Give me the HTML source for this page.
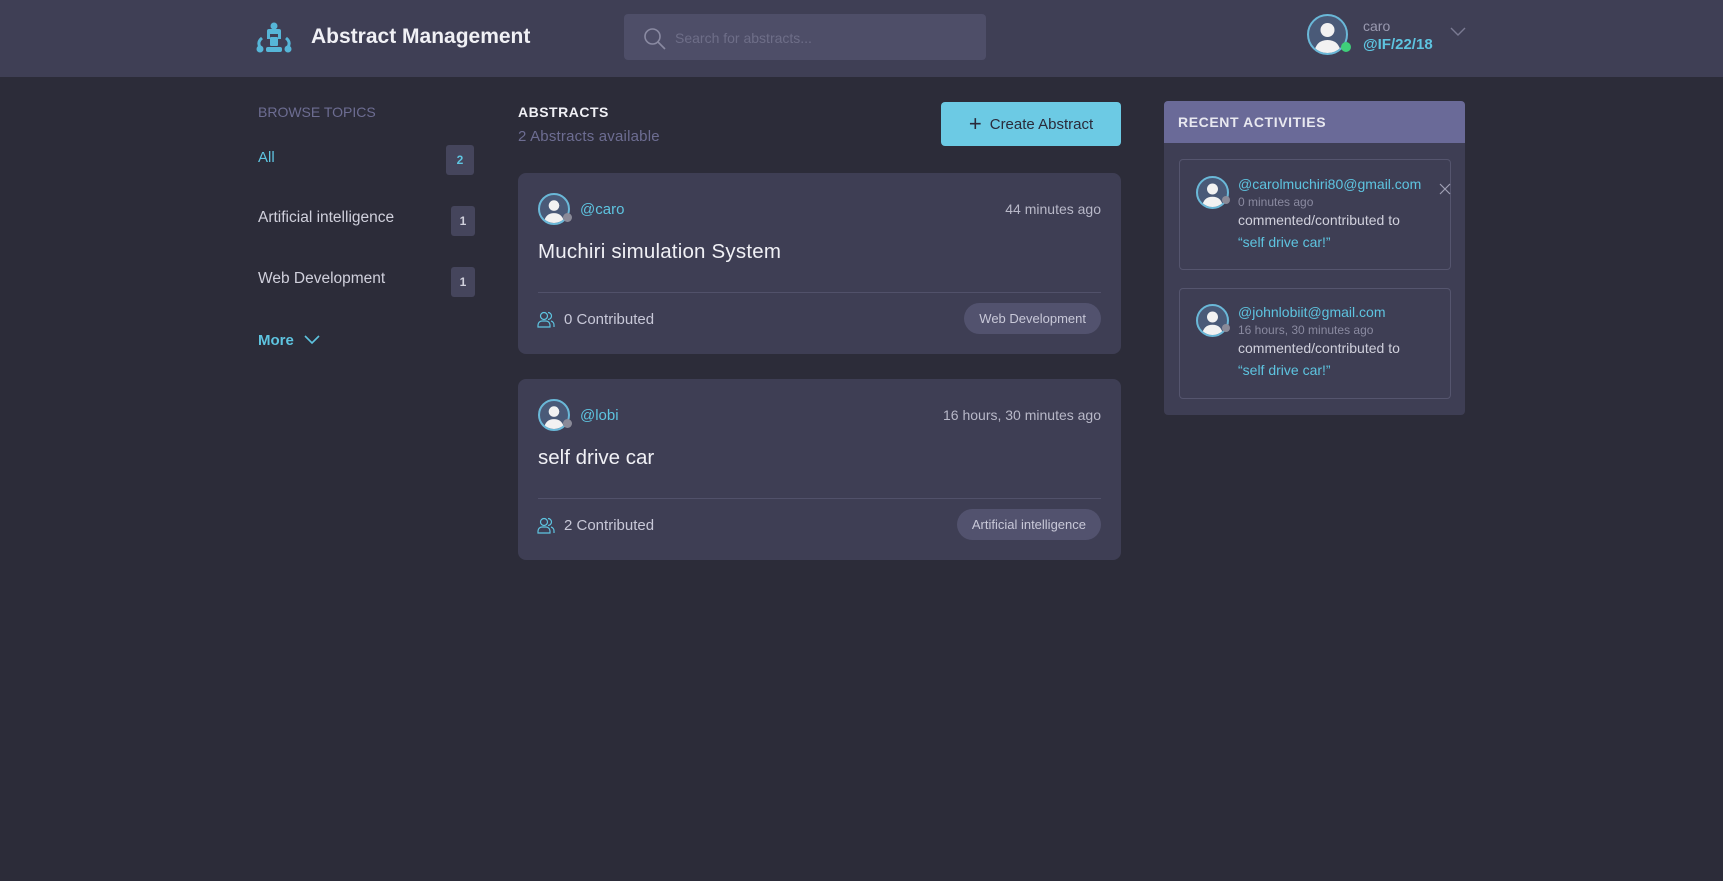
<!DOCTYPE html>
<html><head><meta charset="utf-8"><style>
*{box-sizing:border-box;margin:0;padding:0}
body{width:1723px;height:881px;background:#2c2c39;font-family:"Liberation Sans",sans-serif;position:relative;overflow:hidden;color:#e0e0ea}
.a{position:absolute}
.hdr{left:0;top:0;width:1723px;height:77px;background:#3f3f55}
.cy{color:#5ec4e0}
.badge{background:#45455c;border-radius:3px;width:28px;height:30px;font-size:12px;font-weight:bold;display:flex;align-items:center;justify-content:center;color:#d0d0dc}
.card{background:#3e3e54;border-radius:8px;width:603px;height:181px;left:518px}
.av{border-radius:50%;border:2px solid #6ab8d8;background:#4a5a78;overflow:hidden}
.sep{height:1px;background:#51516a}
.pill{background:#52526e;border-radius:16px;height:31px;font-size:13px;color:#c8c8d8;display:flex;align-items:center;padding:0 15px}
.act{border:1.5px solid #55556e;border-radius:4px;width:272px;height:111px;left:1179px}
</style></head><body>
<div class="a hdr"></div>
<svg class="a" style="left:256px;top:22px" width="36" height="32" viewBox="0 0 36 32" fill="#56b6d8">
<circle cx="18" cy="4" r="3.5"/><rect x="11" y="7" width="14" height="5" rx="2"/><rect x="11" y="9" width="3" height="8"/><rect x="22" y="9" width="3" height="8"/>
<path d="M6 16 q-5 4 -2 9" stroke="#56b6d8" stroke-width="3" fill="none"/><path d="M30 16 q5 4 2 9" stroke="#56b6d8" stroke-width="3" fill="none"/>
<rect x="14" y="15" width="8" height="9" rx="1"/><circle cx="4" cy="27" r="3.5"/><circle cx="32" cy="27" r="3.5"/><rect x="10" y="25" width="16" height="5" rx="2"/>
</svg>
<div class="a" style="left:311px;top:25px;font-size:21px;font-weight:bold;color:#f0f0f5">Abstract Management</div>
<div class="a" style="left:624px;top:14px;width:362px;height:46px;background:#4e4e68;border-radius:4px"></div>
<svg class="a" style="left:643px;top:27px" width="24" height="24" viewBox="0 0 24 24" fill="none" stroke="#8a8aa2" stroke-width="1.6"><circle cx="9.5" cy="9.5" r="7.5"/><path d="M15 15l7 7"/></svg>
<div class="a" style="left:675px;top:30px;font-size:14px;color:#6e6e88">Search for abstracts...</div>
<div class="a av" style="left:1307px;top:14px;width:41px;height:41px"><svg width="37" height="37" viewBox="0 0 37 37"><circle cx="18.5" cy="14" r="7" fill="#f2f2f2"/><path d="M5 37 q2-13 13.5-13 q11.5 0 13.5 13z" fill="#f2f2f2"/></svg></div>
<div class="a" style="left:1341px;top:42px;width:10px;height:10px;border-radius:50%;background:#3fcf7a"></div>
<div class="a" style="left:1363px;top:18px;font-size:14px;color:#9a9ab0">caro</div>
<div class="a cy" style="left:1363px;top:36px;font-size:15px;font-weight:bold">@IF/22/18</div>
<svg class="a" style="left:1450px;top:27px" width="16" height="10" viewBox="0 0 16 10" fill="none" stroke="#7a7a92" stroke-width="1.4"><path d="M1 1l7 7 7-7"/></svg>

<div class="a" style="left:258px;top:104px;font-size:14px;color:#6d6d92">BROWSE TOPICS</div>
<div class="a cy" style="left:258px;top:149px;font-size:15px">All</div>
<div class="a badge cy" style="left:446px;top:145px;color:#5ec4e0">2</div>
<div class="a" style="left:258px;top:209px;font-size:15.5px;color:#d0d0dc">Artificial intelligence</div>
<div class="a badge" style="left:451px;top:206px;width:24px">1</div>
<div class="a" style="left:258px;top:270px;font-size:15.5px;color:#d0d0dc">Web Development</div>
<div class="a badge" style="left:451px;top:267px;width:24px">1</div>
<div class="a cy" style="left:258px;top:332px;font-size:15px;font-weight:bold">More</div>
<svg class="a" style="left:304px;top:335px" width="16" height="10" viewBox="0 0 16 10" fill="none" stroke="#5ec4e0" stroke-width="1.6"><path d="M1 1l7 7 7-7"/></svg>

<div class="a" style="left:518px;top:104px;font-size:14px;font-weight:bold;color:#f0f0f5;letter-spacing:.5px">ABSTRACTS</div>
<div class="a" style="left:518px;top:128px;font-size:15px;color:#6d6d92;letter-spacing:.2px">2 Abstracts available</div>
<div class="a" style="left:941px;top:102px;width:180px;height:44px;background:#6ccae4;border-radius:4px;display:flex;align-items:center;justify-content:center;font-size:15px;color:#2a2a3a"><span style="font-size:22px;font-weight:300;margin-right:8px">+</span>Create Abstract</div>

<div class="a card" style="top:173px"></div>
<div class="a av" style="left:538px;top:193px;width:32px;height:32px"><svg width="28" height="28" viewBox="0 0 37 37"><circle cx="18.5" cy="14" r="7" fill="#f2f2f2"/><path d="M5 37 q2-13 13.5-13 q11.5 0 13.5 13z" fill="#f2f2f2"/></svg></div>
<div class="a" style="left:563px;top:213px;width:9px;height:9px;border-radius:50%;background:#8a8a98"></div>
<div class="a cy" style="left:580px;top:201px;font-size:15px">@caro</div>
<div class="a" style="right:622px;top:201px;font-size:14px;color:#b8b8c8">44 minutes ago</div>
<div class="a" style="left:538px;top:240px;font-size:20.5px;color:#f0f0f5;letter-spacing:.2px">Muchiri simulation System</div>
<div class="a sep" style="left:538px;top:292px;width:563px"></div>
<svg class="a" style="left:537px;top:311px" width="18" height="17" viewBox="0 0 18 17" fill="none" stroke="#5ec4e0" stroke-width="1.2"><circle cx="7" cy="5" r="3.5"/><path d="M1 16v-2a4 4 0 0 1 4-4h4a4 4 0 0 1 4 4v2z"/><path d="M11 1.5a3.5 3.5 0 0 1 0 7M14 10a4 4 0 0 1 3 4v2"/></svg>
<div class="a" style="left:564px;top:311px;font-size:15px;color:#c8c8d8">0 Contributed</div>
<div class="a pill" style="right:622px;top:303px">Web Development</div>

<div class="a card" style="top:379px"></div>
<div class="a av" style="left:538px;top:399px;width:32px;height:32px"><svg width="28" height="28" viewBox="0 0 37 37"><circle cx="18.5" cy="14" r="7" fill="#f2f2f2"/><path d="M5 37 q2-13 13.5-13 q11.5 0 13.5 13z" fill="#f2f2f2"/></svg></div>
<div class="a" style="left:563px;top:419px;width:9px;height:9px;border-radius:50%;background:#8a8a98"></div>
<div class="a cy" style="left:580px;top:407px;font-size:15px">@lobi</div>
<div class="a" style="right:622px;top:407px;font-size:14px;color:#b8b8c8">16 hours, 30 minutes ago</div>
<div class="a" style="left:538px;top:446px;font-size:20.5px;color:#f0f0f5">self drive car</div>
<div class="a sep" style="left:538px;top:498px;width:563px"></div>
<svg class="a" style="left:537px;top:517px" width="18" height="17" viewBox="0 0 18 17" fill="none" stroke="#5ec4e0" stroke-width="1.2"><circle cx="7" cy="5" r="3.5"/><path d="M1 16v-2a4 4 0 0 1 4-4h4a4 4 0 0 1 4 4v2z"/><path d="M11 1.5a3.5 3.5 0 0 1 0 7M14 10a4 4 0 0 1 3 4v2"/></svg>
<div class="a" style="left:564px;top:517px;font-size:15px;color:#c8c8d8">2 Contributed</div>
<div class="a pill" style="right:622px;top:509px">Artificial intelligence</div>

<div class="a" style="left:1164px;top:101px;width:301px;height:314px;background:#3e3e54;border-radius:4px;overflow:hidden"><div style="height:42px;background:#6a6a98"></div></div>
<div class="a" style="left:1178px;top:114px;font-size:14px;font-weight:bold;color:#e8e8f0;letter-spacing:.6px">RECENT ACTIVITIES</div>

<div class="a act" style="top:159px"></div>
<div class="a av" style="left:1196px;top:176px;width:33px;height:33px"><svg width="29" height="29" viewBox="0 0 37 37"><circle cx="18.5" cy="14" r="7" fill="#f2f2f2"/><path d="M5 37 q2-13 13.5-13 q11.5 0 13.5 13z" fill="#f2f2f2"/></svg></div>
<div class="a" style="left:1222px;top:196px;width:8px;height:8px;border-radius:50%;background:#8a8a98"></div>
<div class="a cy" style="left:1238px;top:176px;font-size:14px">@carolmuchiri80@gmail.com</div>
<div class="a" style="left:1238px;top:195px;font-size:12px;color:#8a8aa0">0 minutes ago</div>
<div class="a" style="left:1238px;top:212px;font-size:14px;color:#d0d0dc">commented/contributed to</div>
<div class="a cy" style="left:1238px;top:234px;font-size:14px">“self drive car!”</div>
<svg class="a" style="left:1439px;top:183px" width="12" height="12" viewBox="0 0 12 12" stroke="#a0a0b4" stroke-width="1.2"><path d="M1 1l10 10M11 1L1 11"/></svg>

<div class="a act" style="top:288px"></div>
<div class="a av" style="left:1196px;top:304px;width:33px;height:33px"><svg width="29" height="29" viewBox="0 0 37 37"><circle cx="18.5" cy="14" r="7" fill="#f2f2f2"/><path d="M5 37 q2-13 13.5-13 q11.5 0 13.5 13z" fill="#f2f2f2"/></svg></div>
<div class="a" style="left:1222px;top:324px;width:8px;height:8px;border-radius:50%;background:#8a8a98"></div>
<div class="a cy" style="left:1238px;top:304px;font-size:14px">@johnlobiit@gmail.com</div>
<div class="a" style="left:1238px;top:323px;font-size:12px;color:#8a8aa0">16 hours, 30 minutes ago</div>
<div class="a" style="left:1238px;top:340px;font-size:14px;color:#d0d0dc">commented/contributed to</div>
<div class="a cy" style="left:1238px;top:362px;font-size:14px">“self drive car!”</div>
</body></html>
